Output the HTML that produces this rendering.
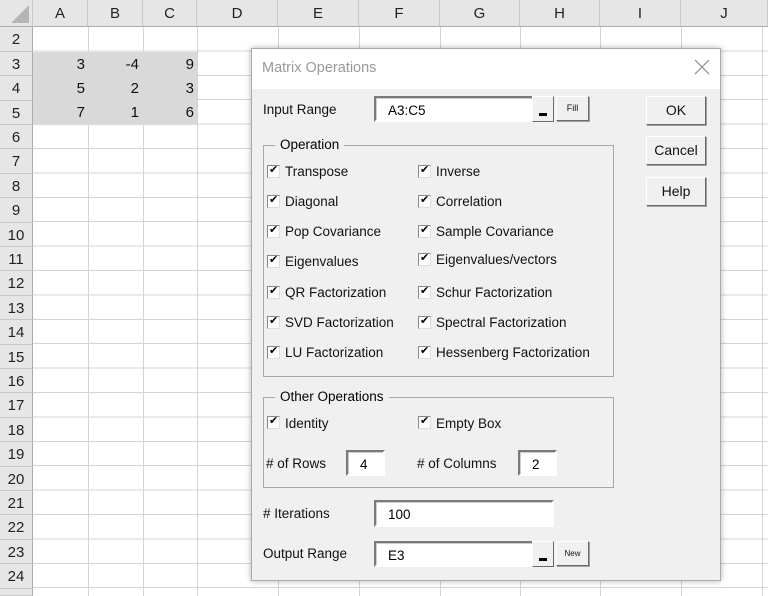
<!DOCTYPE html><html style="overflow:hidden;height:596px"><head><style>
*{margin:0;padding:0;box-sizing:border-box}
body{width:768px;height:596px;overflow:hidden;background:#fff;font-family:"Liberation Sans",sans-serif;position:relative}
.a{position:absolute}
#grid{left:0;top:27px;width:768px;height:569px;background:repeating-linear-gradient(to bottom,transparent 0,transparent 23.4px,#d4d4d4 23.4px,#d4d4d4 24.4px)}
.vl{position:absolute;top:0;width:1px;height:596px;background:#d4d4d4}
.ch{position:absolute;top:0;height:27px;background:#e6e6e6;border-right:1px solid #c8c8c8;border-bottom:1px solid #ababab;font-size:15px;color:#222;text-align:center;line-height:28px}
.rh{position:absolute;left:0;width:33px;height:24.4px;background:#e6e6e6;border-bottom:1px solid #c8c8c8;border-right:1px solid #ababab;font-size:15px;color:#222;text-align:center;line-height:25px}
.num{position:absolute;font-size:15px;text-align:right;width:50px;color:#111}
.dlg{left:251px;top:48px;width:470px;height:533px;background:#f0f0f0;border:1px solid #aaa;box-shadow:0 0 6px rgba(0,0,0,.3)}
.t{position:absolute;font-size:13.5px;color:#111;white-space:nowrap}
.cb{position:absolute;width:13px;height:13px;background:#fff;border:1px solid #888;border-right-color:#ddd;border-bottom-color:#ddd}
.cb:after{content:"✔";position:absolute;left:1px;top:-3px;font-size:11px;color:#000;font-family:"DejaVu Sans",sans-serif}
.inp{position:absolute;background:#fff;border:2px solid;border-color:#7a7a7a #fff #fff #7a7a7a;box-shadow:inset 1px 1px 0 #ccc;font-size:13.5px;padding-left:12px;line-height:25px}
.btn{position:absolute;background:#f0f0f0;border:1px solid;border-color:#fff #6b6b6b #6b6b6b #fff;box-shadow:1px 1px 0 #a0a0a0;font-size:14px;text-align:center;color:#111}
.grp{position:absolute;border:1px solid #a8a8a8}
.lg{position:absolute;background:#f0f0f0;padding:0 5px;font-size:13.5px;top:-9px;left:11px}
.us{position:absolute;right:-2px;top:-2px;width:22px;height:26px;background:#f0f0f0;border:1px solid;border-color:#fff #6b6b6b #6b6b6b #fff}
.us:after{content:"";position:absolute;left:6px;bottom:5px;width:8px;height:3px;background:#000}
</style></head><body>
<div id="grid" class="a"></div>
<div class="vl" style="left:88px"></div><div class="vl" style="left:143px"></div><div class="vl" style="left:197px"></div><div class="vl" style="left:278px"></div><div class="vl" style="left:359px"></div><div class="vl" style="left:440px"></div><div class="vl" style="left:520px"></div><div class="vl" style="left:600px"></div><div class="vl" style="left:681px"></div><div class="vl" style="left:762px"></div>
<div class="a" style="left:33px;top:52px;width:164px;height:73px;background:#d9d9d9"></div>
<div class="ch" style="left:0;width:33px"><div style="position:absolute;right:3px;bottom:3px;width:0;height:0;border-left:18px solid transparent;border-bottom:18px solid #b5b5b5"></div></div>
<div class="ch" style="left:33px;width:55px">A</div><div class="ch" style="left:88px;width:55px">B</div><div class="ch" style="left:143px;width:54px">C</div><div class="ch" style="left:197px;width:81px">D</div><div class="ch" style="left:278px;width:81px">E</div><div class="ch" style="left:359px;width:81px">F</div><div class="ch" style="left:440px;width:80px">G</div><div class="ch" style="left:520px;width:80px">H</div><div class="ch" style="left:600px;width:81px">I</div><div class="ch" style="left:681px;width:87px">J</div>
<div class="rh" style="top:27.4px">2</div><div class="rh" style="top:51.8px">3</div><div class="rh" style="top:76.2px">4</div><div class="rh" style="top:100.6px">5</div><div class="rh" style="top:125px">6</div><div class="rh" style="top:149.4px">7</div><div class="rh" style="top:173.8px">8</div><div class="rh" style="top:198.2px">9</div><div class="rh" style="top:222.6px">10</div><div class="rh" style="top:247px">11</div><div class="rh" style="top:271.4px">12</div><div class="rh" style="top:295.8px">13</div><div class="rh" style="top:320.2px">14</div><div class="rh" style="top:344.6px">15</div><div class="rh" style="top:369px">16</div><div class="rh" style="top:393.4px">17</div><div class="rh" style="top:417.8px">18</div><div class="rh" style="top:442.2px">19</div><div class="rh" style="top:466.6px">20</div><div class="rh" style="top:491px">21</div><div class="rh" style="top:515.4px">22</div><div class="rh" style="top:539.8px">23</div><div class="rh" style="top:564.2px">24</div><div class="rh" style="top:588.6px;height:7.4px"></div>
<div class="num" style="left:35px;top:56px">3</div><div class="num" style="left:89px;top:56px">-4</div><div class="num" style="left:144px;top:56px">9</div>
<div class="num" style="left:35px;top:80px">5</div><div class="num" style="left:89px;top:80px">2</div><div class="num" style="left:144px;top:80px">3</div>
<div class="num" style="left:35px;top:104px">7</div><div class="num" style="left:89px;top:104px">1</div><div class="num" style="left:144px;top:104px">6</div>

<div class="a dlg">
<div class="a" style="left:0;top:0;width:468px;height:40px;background:#fff"></div>
<div class="t" style="left:10px;top:11px;font-size:14.5px;color:#999">Matrix Operations</div>
<svg class="a" style="left:442px;top:10px" width="16" height="16"><path d="M1 1L15 15M15 1L1 15" stroke="#888" stroke-width="1.2"/></svg>
<div class="t" style="left:11px;top:53px">Input Range</div>
<div class="inp" style="left:122px;top:47px;width:180px;height:26px">A3:C5<div class="us"></div></div>
<div class="btn" style="left:304px;top:47px;width:33px;height:25px;font-size:9px;line-height:23px">Fill</div>
<div class="btn" style="left:394px;top:47px;width:60px;height:29px;line-height:27px">OK</div>
<div class="btn" style="left:394px;top:87px;width:60px;height:29px;line-height:27px">Cancel</div>
<div class="btn" style="left:394px;top:128px;width:60px;height:29px;line-height:27px">Help</div>
<div class="grp" style="left:11px;top:96px;width:351px;height:232px"><div class="lg">Operation</div></div>
<div class="cb" style="left:15px;top:116px"></div><div class="t" style="left:33px;top:115px">Transpose</div>
<div class="cb" style="left:166px;top:116px"></div><div class="t" style="left:184px;top:115px">Inverse</div>
<div class="cb" style="left:15px;top:146px"></div><div class="t" style="left:33px;top:145px">Diagonal</div>
<div class="cb" style="left:166px;top:146px"></div><div class="t" style="left:184px;top:145px">Correlation</div>
<div class="cb" style="left:15px;top:176px"></div><div class="t" style="left:33px;top:175px">Pop Covariance</div>
<div class="cb" style="left:166px;top:176px"></div><div class="t" style="left:184px;top:175px">Sample Covariance</div>
<div class="cb" style="left:15px;top:206px"></div><div class="t" style="left:33px;top:205px">Eigenvalues</div>
<div class="cb" style="left:166px;top:204px"></div><div class="t" style="left:184px;top:203px">Eigenvalues/vectors</div>
<div class="cb" style="left:15px;top:237px"></div><div class="t" style="left:33px;top:236px">QR Factorization</div>
<div class="cb" style="left:166px;top:237px"></div><div class="t" style="left:184px;top:236px">Schur Factorization</div>
<div class="cb" style="left:15px;top:267px"></div><div class="t" style="left:33px;top:266px">SVD Factorization</div>
<div class="cb" style="left:166px;top:267px"></div><div class="t" style="left:184px;top:266px">Spectral Factorization</div>
<div class="cb" style="left:15px;top:297px"></div><div class="t" style="left:33px;top:296px">LU Factorization</div>
<div class="cb" style="left:166px;top:297px"></div><div class="t" style="left:184px;top:296px">Hessenberg Factorization</div>
<div class="grp" style="left:11px;top:348px;width:351px;height:91px"><div class="lg">Other Operations</div></div>
<div class="cb" style="left:15px;top:367px"></div><div class="t" style="left:33px;top:367px">Identity</div>
<div class="cb" style="left:166px;top:367px"></div><div class="t" style="left:184px;top:367px">Empty Box</div>
<div class="t" style="left:14px;top:407px"># of Rows</div>
<div class="inp" style="left:94px;top:401px;width:39px;height:26px">4</div>
<div class="t" style="left:165px;top:407px"># of Columns</div>
<div class="inp" style="left:266px;top:401px;width:39px;height:26px">2</div>
<div class="t" style="left:11px;top:457px"># Iterations</div>
<div class="inp" style="left:122px;top:451px;width:180px;height:27px">100</div>
<div class="t" style="left:11px;top:497px">Output Range</div>
<div class="inp" style="left:122px;top:492px;width:180px;height:26px">E3<div class="us"></div></div>
<div class="btn" style="left:304px;top:492px;width:33px;height:25px;font-size:8px;line-height:23px">New</div>
</div>
</body></html>
